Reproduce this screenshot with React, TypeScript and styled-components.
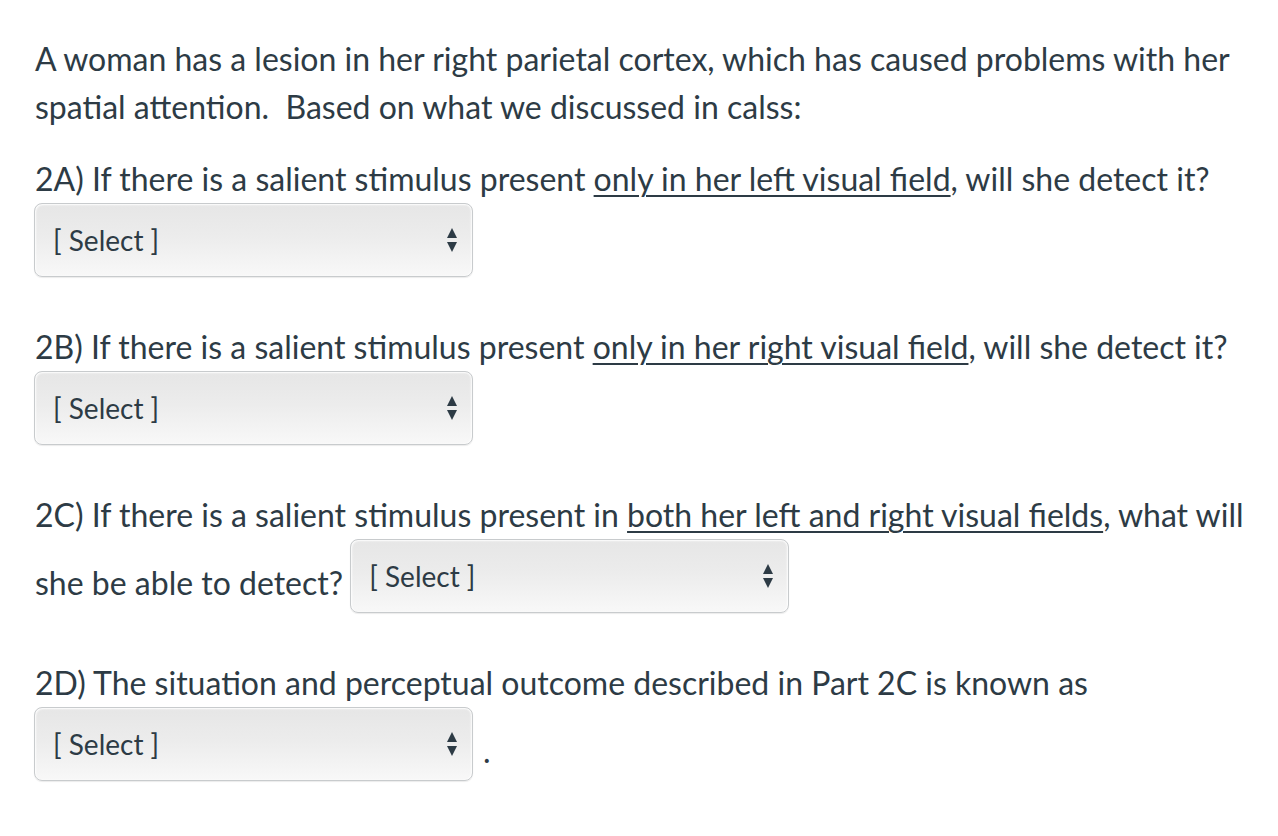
import styled, { createGlobalStyle } from 'styled-components'

const GlobalStyle = createGlobalStyle`
  html, body {
    margin: 0;
    padding: 0;
    background: #ffffff;
  }
`

const Page = styled.div`
  padding: 35px 20px 40px 35px;
  color: #2d3b45;
  font-family: Lato, 'Noto Sans', sans-serif;
  font-size: 32px;
  line-height: 48px;
`

const Intro = styled.p`
  margin: 0 0 24px;
`

const Question = styled.p`
  margin: 0 0 46px;
`

const U = styled.span`
  text-decoration: underline;
  text-decoration-thickness: 2px;
  text-underline-offset: 4px;
`

// inline-block + overflow hidden puts the baseline on the bottom edge
const SelectBox = styled.span`
  display: inline-block;
  box-sizing: border-box;
  width: 439px;
  height: 74px;
  overflow: hidden;
  vertical-align: -18px;
  margin-left: -1px;
  margin-right: 10px;
  border: 1px solid #c8cbcd;
  border-radius: 8px;
  background: linear-gradient(#e6e6e6 0%, #ececec 45%, #f8f8f8 100%);
  box-shadow: inset 1px 1px 2px rgba(255, 255, 255, 0.9), inset -1px 0 2px rgba(255, 255, 255, 0.9),
    0 1px 1px rgba(0, 0, 0, 0.08);
  color: #2d3b45;
  cursor: pointer;
`

const SelectInner = styled.span`
  display: flex;
  height: 100%;
  align-items: center;
  justify-content: space-between;
  padding: 0 15px 0 18px;
  font-size: 28px;
  line-height: 1;
`

const Arrows = styled.span`
  display: flex;
  flex-direction: column;
  gap: 4px;
`

const Tri = styled.span<{ $down?: boolean }>`
  width: 0;
  height: 0;
  border-left: 5px solid transparent;
  border-right: 5px solid transparent;
  ${({ $down }) =>
    $down ? 'border-top: 10px solid #2d3b45;' : 'border-bottom: 10px solid #2d3b45;'}
`

function Select() {
  return (
    <SelectBox>
      <SelectInner>
        [ Select ]
        <Arrows>
          <Tri />
          <Tri $down />
        </Arrows>
      </SelectInner>
    </SelectBox>
  )
}

export default function App() {
  return (
    <>
      <GlobalStyle />
      <Page>
        <Intro>
          A woman has a lesion in her right parietal cortex, which has caused problems with her spatial
          attention.&nbsp; Based on what we discussed in calss:
        </Intro>
        <Question>
          2A) If there is a salient stimulus present <U>only in her left visual field</U>, will she detect it?{' '}
          <Select />
        </Question>
        <Question>
          2B) If there is a salient stimulus present <U>only in her right visual field</U>, will she detect it?{' '}
          <Select />
        </Question>
        <Question>
          2C) If there is a salient stimulus present in <U>both her left and right visual fields</U>, what will she
          be able to detect? <Select />
        </Question>
        <Question>
          2D) The situation and perceptual outcome described in Part 2C is known as <Select />.
        </Question>
      </Page>
    </>
  )
}
